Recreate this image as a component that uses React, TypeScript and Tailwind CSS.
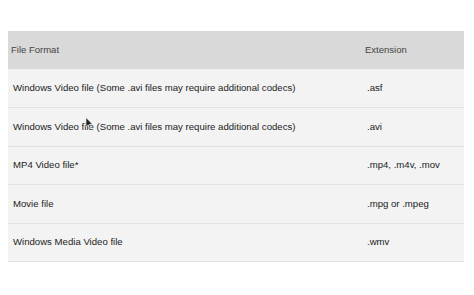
const rows = [
  { format: "Windows Video file (Some .avi files may require additional codecs)", ext: ".asf" },
  { format: "Windows Video file (Some .avi files may require additional codecs)", ext: ".avi" },
  { format: "MP4 Video file*", ext: ".mp4, .m4v, .mov" },
  { format: "Movie file", ext: ".mpg or .mpeg" },
  { format: "Windows Media Video file", ext: ".wmv" },
];

function Cursor() {
  return (
    <svg
      className="absolute left-[85px] top-[117px]"
      width="8"
      height="12"
      viewBox="0 0 8 12"
    >
      <path d="M1 0.5 L1 10 L3.2 7.8 L4.8 11.2 L6 10.6 L4.5 7.3 L7.5 7.3 Z" fill="#222" stroke="#fff" strokeWidth="0.6" />
    </svg>
  );
}

export default function App() {
  return (
    <div className="relative h-[295px] w-[474px] bg-white pt-[31px] font-['Liberation_Sans',Arial,sans-serif]">
      <table className="ml-[8px] w-[456px] border-collapse">
        <thead>
          <tr className="h-[38px] bg-[#d9d9d9] text-left text-[9.5px] text-[#444]">
            <th className="w-[354px] pl-[3px] font-normal">File Format</th>
            <th className="pl-[3px] font-normal">Extension</th>
          </tr>
        </thead>
        <tbody>
          {rows.map((r, i) => (
            <tr
              key={i}
              className="h-[38.6px] border-b border-[#e2e2e2] bg-[#f3f3f3] text-[9.6px] text-[#222]"
            >
              <td className="pl-[5px]">{r.format}</td>
              <td className="pl-[5px]">{r.ext}</td>
            </tr>
          ))}
        </tbody>
      </table>
      <Cursor />
    </div>
  );
}
